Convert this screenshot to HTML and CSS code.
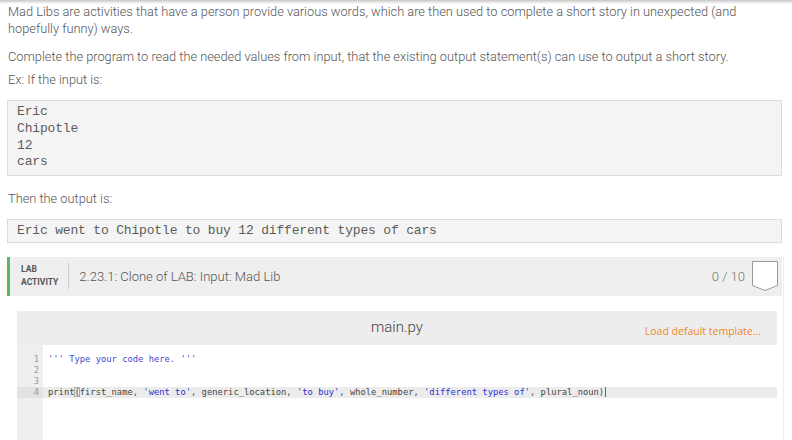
FILE: index.html
```html
<!DOCTYPE html>
<html>
<head>
<meta charset="utf-8">
<link rel="stylesheet" href="styles.css">
</head>
<body>
<div class="topshadow"></div>
<div class="page">
  <p class="para first">Mad Libs are activities that have a person provide various words, which are then used to complete a short story in unexpected (and hopefully funny) ways.</p>
  <p class="para second">Complete the program to read the needed values from input, that the existing output statement(s) can use to output a short story.</p>
  <p class="para third">Ex: If the input is:</p>
  <pre class="sample input">Eric
Chipotle
12
cars</pre>
  <p class="para then">Then the output is:</p>
  <pre class="sample output">Eric went to Chipotle to buy 12 different types of cars</pre>

  <div class="lab">
    <div class="lab-header">
      <div class="lab-label">LAB<br>ACTIVITY</div>
      <div class="lab-title">2.23.1: Clone of LAB: Input: Mad Lib</div>
      <div class="lab-score">0 / 10</div>
      <svg class="badge" width="26" height="30" viewBox="0 0 26 30">
        <path d="M0.5 0.5 H25.5 V24.5 L13 29.5 L0.5 24.5 Z" fill="#fff" stroke="#999" stroke-width="1"/>
      </svg>
    </div>
    <div class="lab-body">
      <div class="editor">
        <div class="editor-head">
          <span></span>
          <span class="filename">main.py</span>
          <span class="load">Load default template...</span>
        </div>
        <div class="code">
          <div class="gutter">
            <div class="ln">1</div>
            <div class="ln">2</div>
            <div class="ln">3</div>
            <div class="ln active">4</div>
          </div>
          <div class="lines">
            <div class="line"><span class="cm">''' Type your code here. '''</span></div>
            <div class="line">&nbsp;</div>
            <div class="line">&nbsp;</div>
            <div class="line active">print<span class="match">(</span>first_name, <span class="str">'went to'</span>, generic_location, <span class="str">'to buy'</span>, whole_number, <span class="str">'different types of'</span>, plural_noun)<span class="cursor"></span></div>
          </div>
        </div>
      </div>
    </div>
  </div>
</div>
</body>
</html>
```
FILE: styles.css
```css
html, body {
  margin: 0;
  padding: 0;
  background: #fff;
}
body {
  font-family: Roboto, "Liberation Sans", sans-serif;
  font-weight: 300;
  color: #555;
  font-size: 12.8px;
  overflow: hidden;
}
.topshadow {
  height: 4px;
  background: linear-gradient(#c8c8c8, rgba(255,255,255,0));
  margin-bottom: -4px;
  position: relative;
}
.page {
  padding: 3px 10px 0 7px;
}
.para {
  margin: 0;
  line-height: 17px;
  padding-left: 1px;
}
.para.second { margin-top: 11px; }
.para.third { margin-top: 6px; }
.para.then { margin-top: 14px; }
.sample {
  margin: 12px 0 0 0;
  background: #f4f4f4;
  border: 1px solid #dcdcdc;
  font-family: "Liberation Mono", "Courier New", monospace;
  font-size: 13px;
  letter-spacing: -0.17px;
  line-height: 16.8px;
  color: #5c5c5c;
  padding: 3px 9px 4px;
}
.sample.output {
  margin-top: 12px;
  padding: 3px 9px 2px;
}
.lab {
  margin-top: 14px;
  border-right: 1px solid #eee;
  margin-right: -2px;
}
.lab-header {
  display: flex;
  align-items: center;
  height: 39px;
  background: #efefef;
  border-left: 3px solid #5cb85c;
  padding-right: 4px;
  margin-right: 1px;
}
.lab-label {
  font-weight: 700;
  font-size: 8.5px;
  line-height: 13px;
  color: #555;
  padding: 0 10px 0 11px;
  border-right: 1px solid #ccc;
}
.lab-title {
  flex: 1;
  padding-left: 10px;
  font-size: 13px;
  color: #555;
}
.lab-score {
  font-size: 13px;
  color: #777;
  margin-right: 7px;
  margin-top: 1px;
}
.badge {
  display: block;
}
.lab-body {
  padding: 15px 6px 0 10px;
}
.editor-head {
  display: grid;
  grid-template-columns: 1fr auto 1fr;
  align-items: center;
  height: 34px;
  background: #ededed;
}
.filename {
  font-size: 15px;
  color: #444;
  margin-top: -2px;
}
.load {
  justify-self: end;
  padding-right: 16px;
  font-family: "Open Sans", sans-serif;
  font-weight: 400;
  font-size: 10.5px;
  color: #f0871d;
  margin-top: 7px;
}
.code {
  display: flex;
  height: 110px;
  font-family: "DejaVu Sans Mono", monospace;
  font-size: 8.8px;
  line-height: 10.9px;
  font-weight: 400;
}
.gutter {
  width: 26px;
  background: #efefef;
  padding-top: 9px;
  color: #999;
  text-align: right;
}
.ln {
  padding-right: 4px;
}
.ln.active {
  background: #e2e2e2;
}
.lines {
  flex: 1;
  padding-top: 9px;
  color: #444;
}
.line {
  padding-left: 5px;
  white-space: pre;
}
.line.active {
  background: #ececec;
}
.cm { color: #4848cc; }
.str { color: #3030d8; }
.match {
  outline: 1px solid #aaa;
  outline-offset: -1px;
}
.cursor {
  display: inline-block;
  width: 1px;
  height: 10px;
  background: #666;
  vertical-align: -2px;
  margin-left: 1px;
}
```
